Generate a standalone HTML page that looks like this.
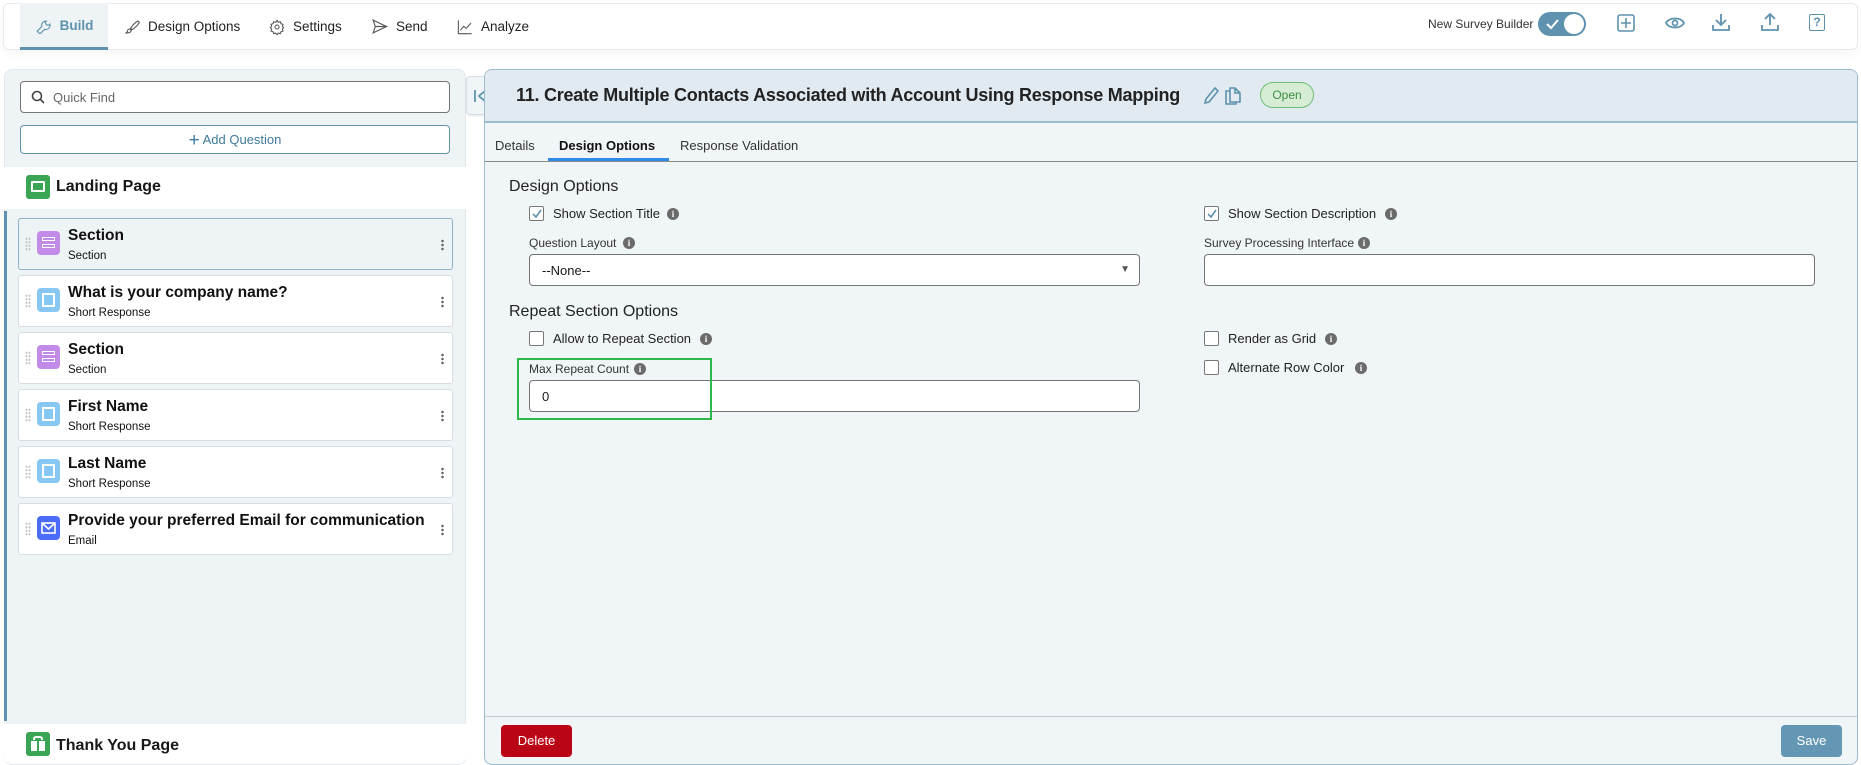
<!DOCTYPE html>
<html><head><meta charset="utf-8"><style>
*{box-sizing:border-box;margin:0;padding:0}
body{width:1861px;height:765px;background:#fff;font-family:"Liberation Sans",sans-serif;color:#181818;position:relative;overflow:hidden;font-size:13px}
.a{position:absolute}
.top{left:3px;top:3px;width:1855px;height:47px;border:1px solid #e6e9ee;border-radius:6px;background:#fff;box-shadow:0 4px 10px rgba(0,0,0,.04)}
.nav{top:3px;height:47px;display:flex;align-items:center;font-size:13.5px;color:#222}
.nav svg{margin-right:8px}
.build{left:20px;width:88px;background:#eef3f6;border-bottom:3px solid #5e92ae;justify-content:center;color:#5e92ae;font-weight:bold}
.lp{left:4px;top:69px;width:462px;height:696px;background:#eef3f6;border:1px solid #e3e8ec;border-radius:8px}
.inp{background:#fff;border:1px solid #747474;border-radius:4px}
.item{left:18px;width:435px;height:52px;background:#fff;border:1px solid #d8dde3;border-radius:3px}
.item .ic{position:absolute;left:18px;top:12px;width:23px;height:24px;border-radius:4px}
.item .t{position:absolute;left:49px;top:8px;font-size:15.5px;font-weight:bold;color:#111}
.item .s{position:absolute;left:49px;top:31px;font-size:11.5px;color:#111}
.item .dr{position:absolute;left:6px;top:18px;width:6px;height:14px;background-image:radial-gradient(circle,#c8c8c8 1px,transparent 1.2px);background-size:3px 3.5px}
.item .dots{position:absolute;right:8px;top:20px;width:3px;height:12px;background-image:radial-gradient(circle,#666 1.2px,transparent 1.4px);background-size:3px 4px}
.rp{left:484px;top:69px;width:1374px;height:696px;background:#f0f5f8;border:1px solid #9bbccc;border-radius:8px;overflow:hidden}
.lbl{font-size:12px;color:#333}
.cb{width:15px;height:15px;border:1px solid #777;border-radius:2px;background:#fff}
.info{width:12px;height:12px;border-radius:50%;background:#6b6b6b;color:#fff;font-size:9px;font-weight:bold;text-align:center;line-height:12px;font-family:"Liberation Serif",serif}
.chk{font-size:13px;color:#222}
</style></head><body>
<div class="a top"></div>
<div class="a nav build"><svg width="17" height="17" viewBox="0 0 24 24" fill="none" stroke="#5e92ae" stroke-width="1.6"><path d="M14.7 6.3a4 4 0 0 0 5 5l1.3-1.3a6 6 0 0 1-7.4 7.4L7 23.9 3 20l6.6-6.6A6 6 0 0 1 17 6l-2.3.3z"/></svg>Build</div>
<div class="a nav" style="left:124px"><svg width="16" height="16" viewBox="0 0 24 24" fill="none" stroke="#555" stroke-width="1.6"><path d="M21 3c-4 2-9 7-11 11l2 2c4-2 9-7 11-11zM9 15c-3 0-4 2-4 4l-2 2c3 0 7 0 8-4z"/></svg>Design Options</div>
<div class="a nav" style="left:269px"><svg width="16" height="16" viewBox="0 0 24 24" fill="none" stroke="#555" stroke-width="1.6"><circle cx="12" cy="12" r="3"/><path d="M12 2l2 3 3-1 1 3 3 1-1 3 2 2-2 2 1 3-3 1-1 3-3-1-2 3-2-3-3 1-1-3-3-1 1-3-2-2 2-2-1-3 3-1 1-3 3 1z"/></svg>Settings</div>
<div class="a nav" style="left:371px"><svg width="17" height="17" viewBox="0 0 24 24" fill="none" stroke="#555" stroke-width="1.6"><path d="M3 3l19 9-19 9 3-9zM6 12h16"/></svg>Send</div>
<div class="a nav" style="left:457px"><svg width="16" height="16" viewBox="0 0 24 24" fill="none" stroke="#555" stroke-width="1.6"><path d="M2 2v20h20M5 17l5-6 4 3 7-8"/></svg>Analyze</div>
<div class="a" style="left:1428px;top:17px;font-size:12px;color:#333">New Survey Builder</div>
<div class="a" style="left:1538px;top:12px;width:48px;height:24px;border-radius:12px;background:#5e92ae"><div class="a" style="left:26px;top:2px;width:20px;height:20px;border-radius:50%;background:#fff"></div><svg class="a" style="left:8px;top:6px" width="13" height="12" viewBox="0 0 13 12" fill="none" stroke="#fff" stroke-width="2"><path d="M1 6l4 4 7-8"/></svg></div>
<svg class="a" style="left:1617px;top:14px" width="18" height="18" viewBox="0 0 18 18" fill="none" stroke="#5e92ae" stroke-width="1.6"><rect x="1" y="1" width="16" height="16" rx="2"/><path d="M9 4v10M4 9h10"/></svg>
<svg class="a" style="left:1665px;top:15px" width="20" height="16" viewBox="0 0 20 16" fill="none" stroke="#5e92ae" stroke-width="1.8"><path d="M1 8c3-6 15-6 18 0-3 6-15 6-18 0z"/><circle cx="10" cy="8" r="2.5"/></svg>
<svg class="a" style="left:1712px;top:13px" width="18" height="18" viewBox="0 0 18 18" fill="none" stroke="#5e92ae" stroke-width="1.8"><path d="M9 1v11M4 7l5 5 5-5M1 12v5h16v-5"/></svg>
<svg class="a" style="left:1761px;top:13px" width="18" height="18" viewBox="0 0 18 18" fill="none" stroke="#5e92ae" stroke-width="1.8"><path d="M9 12V1M4 6l5-5 5 5M1 12v5h16v-5"/></svg>
<div class="a" style="left:1809px;top:14px;width:16px;height:17px;border:1.6px solid #5e92ae;border-radius:2px;color:#5e92ae;font-size:12px;font-weight:bold;text-align:center;line-height:14px">?</div>

<div class="a lp"></div>
<div class="a inp" style="left:20px;top:81px;width:430px;height:32px"><svg class="a" style="left:10px;top:8px" width="14" height="14" viewBox="0 0 14 14" fill="none" stroke="#444" stroke-width="1.6"><circle cx="6" cy="6" r="4.5"/><path d="M9.5 9.5L13 13"/></svg><span class="a" style="left:32px;top:8px;color:#666;font-size:13px">Quick Find</span></div>
<div class="a" style="left:20px;top:125px;width:430px;height:29px;background:#fff;border:1px solid #5e92ae;border-radius:4px;text-align:center;line-height:27px;color:#3f7a9c;font-size:13px"><span style="font-size:19px;vertical-align:-2px">+</span> Add Question</div>
<div class="a" style="left:4px;top:167px;width:462px;height:42px;background:#fff"></div>
<div class="a" style="left:26px;top:175px;width:24px;height:24px;border-radius:3px;background:#3aa655"><div class="a" style="left:5px;top:6px;width:14px;height:11px;border:2px solid #fff;border-radius:1px"></div></div>
<div class="a" style="left:56px;top:178px;font-size:16px;font-weight:bold">Landing Page</div>
<div class="a" style="left:4px;top:211px;width:3px;height:510px;background:#5e92ae"></div>

<div class="a item" style="top:218px;background:#eef3f6;border-color:#8fb1c4"><div class="dr"></div><div class="ic" style="background:#c38be8"><div class="a" style="left:5px;top:6px;width:13px;height:4px;border:1.5px solid #fff"></div><div class="a" style="left:5px;top:13px;width:13px;height:4px;border:1.5px solid #fff"></div></div><div class="t">Section</div><div class="s">Section</div><div class="dots"></div></div>
<div class="a item" style="top:275px"><div class="dr"></div><div class="ic" style="background:#86c7f3"><div class="a" style="left:5px;top:5px;width:13px;height:14px;border:2px solid #fff"></div></div><div class="t">What is your company name?</div><div class="s">Short Response</div><div class="dots"></div></div>
<div class="a item" style="top:332px"><div class="dr"></div><div class="ic" style="background:#c38be8"><div class="a" style="left:5px;top:6px;width:13px;height:4px;border:1.5px solid #fff"></div><div class="a" style="left:5px;top:13px;width:13px;height:4px;border:1.5px solid #fff"></div></div><div class="t">Section</div><div class="s">Section</div><div class="dots"></div></div>
<div class="a item" style="top:389px"><div class="dr"></div><div class="ic" style="background:#86c7f3"><div class="a" style="left:5px;top:5px;width:13px;height:14px;border:2px solid #fff"></div></div><div class="t">First Name</div><div class="s">Short Response</div><div class="dots"></div></div>
<div class="a item" style="top:446px"><div class="dr"></div><div class="ic" style="background:#86c7f3"><div class="a" style="left:5px;top:5px;width:13px;height:14px;border:2px solid #fff"></div></div><div class="t">Last Name</div><div class="s">Short Response</div><div class="dots"></div></div>
<div class="a item" style="top:503px"><div class="dr"></div><div class="ic" style="background:#4a6cf7"><svg class="a" style="left:4px;top:6px" width="15" height="12" viewBox="0 0 15 12" fill="none" stroke="#fff" stroke-width="1.6"><rect x="1" y="1" width="13" height="10"/><path d="M1 1l6.5 6L14 1"/></svg></div><div class="t">Provide your preferred Email for communication</div><div class="s">Email</div><div class="dots"></div></div>

<div class="a" style="left:4px;top:724px;width:462px;height:40px;background:#fff;border-radius:0 0 8px 8px"></div>
<div class="a" style="left:26px;top:732px;width:24px;height:24px;border-radius:3px;background:#3aa655"><div class="a" style="left:5px;top:9px;width:14px;height:10px;background:#fff"></div><div class="a" style="left:11px;top:9px;width:2px;height:10px;background:#3aa655"></div><div class="a" style="left:7px;top:4px;width:10px;height:4px;border:2px solid #fff;border-bottom:none;border-radius:3px 3px 0 0"></div></div>
<div class="a" style="left:56px;top:737px;font-size:16px;font-weight:bold">Thank You Page</div>

<div class="a" style="left:466px;top:76px;width:29px;height:39px;background:#f0f5f8;border:1px solid #d6dde3;border-radius:4px;box-shadow:1px 1px 3px rgba(0,0,0,.1)"><svg class="a" style="left:6px;top:12px" width="15" height="14" viewBox="0 0 15 14" fill="none" stroke="#5e92ae" stroke-width="1.8"><path d="M2 1v12M13 1L6 7l7 6z"/></svg></div>

<div class="a rp">
<div class="a" style="left:0;top:0;width:1374px;height:53px;background:#e2eaf1;border-bottom:2px solid #9bbccc"></div>
<div class="a" style="left:31px;top:15px;font-size:18px;font-weight:bold;color:#222;letter-spacing:-0.25px">11. Create Multiple Contacts Associated with Account Using Response Mapping</div>
<svg class="a" style="left:718px;top:17px" width="16" height="18" viewBox="0 0 16 18" fill="none" stroke="#5e92ae" stroke-width="1.6"><path d="M12 1l3 3-9 11-4 1 1-4z"/></svg>
<svg class="a" style="left:739px;top:14px" width="18" height="21" viewBox="0 0 18 21" fill="none" stroke="#5e92ae" stroke-width="1.6"><path d="M6 4h5l5 5v9H6z"/><path d="M11 4v5h5"/><path d="M6 7H2v13h10v-2"/></svg>
<div class="a" style="left:775px;top:12px;width:54px;height:26px;border:1px solid #6dbf74;background:#d7ecd4;border-radius:13px;color:#3c8f45;font-size:12px;text-align:center;line-height:24px">Open</div>
<div class="a" style="left:10px;top:68px;font-size:13px;color:#333">Details</div>
<div class="a" style="left:74px;top:68px;font-size:13px;font-weight:bold;color:#111">Design Options</div>
<div class="a" style="left:63px;top:88px;width:121px;height:3px;background:#2f8be6"></div>
<div class="a" style="left:195px;top:68px;font-size:13px;color:#333">Response Validation</div>
<div class="a" style="left:0;top:91px;width:1374px;height:1px;background:#8a8a8a"></div>

<div class="a" style="left:24px;top:108px;font-size:16px;color:#222">Design Options</div>
<div class="a cb" style="left:44px;top:136px"><svg class="a" style="left:2px;top:2px" width="10" height="10" viewBox="0 0 10 10" fill="none" stroke="#5e92ae" stroke-width="1.6"><path d="M1 5l3 3 5-7"/></svg></div>
<div class="a chk" style="left:68px;top:136px">Show Section Title</div><div class="a info" style="left:182px;top:138px">i</div>
<div class="a cb" style="left:719px;top:136px"><svg class="a" style="left:2px;top:2px" width="10" height="10" viewBox="0 0 10 10" fill="none" stroke="#5e92ae" stroke-width="1.6"><path d="M1 5l3 3 5-7"/></svg></div>
<div class="a chk" style="left:743px;top:136px">Show Section Description</div><div class="a info" style="left:900px;top:138px">i</div>

<div class="a lbl" style="left:44px;top:166px">Question Layout</div><div class="a info" style="left:138px;top:167px">i</div>
<div class="a inp" style="left:44px;top:184px;width:611px;height:32px"><span class="a" style="left:12px;top:8px;font-size:13px">--None--</span><span class="a" style="right:9px;top:9px;font-size:10px;color:#555">▼</span></div>
<div class="a lbl" style="left:719px;top:166px">Survey Processing Interface</div><div class="a info" style="left:873px;top:167px">i</div>
<div class="a inp" style="left:719px;top:184px;width:611px;height:32px"></div>

<div class="a" style="left:24px;top:233px;font-size:16px;color:#222">Repeat Section Options</div>
<div class="a cb" style="left:44px;top:261px"></div>
<div class="a chk" style="left:68px;top:261px">Allow to Repeat Section</div><div class="a info" style="left:215px;top:263px">i</div>
<div class="a cb" style="left:719px;top:261px"></div>
<div class="a chk" style="left:743px;top:261px">Render as Grid</div><div class="a info" style="left:840px;top:263px">i</div>
<div class="a cb" style="left:719px;top:290px"></div>
<div class="a chk" style="left:743px;top:290px">Alternate Row Color</div><div class="a info" style="left:870px;top:292px">i</div>
<div class="a lbl" style="left:44px;top:292px">Max Repeat Count</div><div class="a info" style="left:149px;top:293px">i</div>
<div class="a inp" style="left:44px;top:310px;width:611px;height:32px"><span class="a" style="left:12px;top:8px;font-size:13px">0</span></div>
<div class="a" style="left:32px;top:288px;width:195px;height:62px;border:2.5px solid #2db84b"></div>

<div class="a" style="left:0;top:646px;width:1374px;height:1px;background:#c3c9cf"></div>
<div class="a" style="left:16px;top:655px;width:71px;height:32px;background:#ba0517;border-radius:4px;color:#fff;font-size:13px;text-align:center;line-height:32px">Delete</div>
<div class="a" style="left:1296px;top:655px;width:61px;height:32px;background:#6397b4;border-radius:4px;color:#fff;font-size:13px;text-align:center;line-height:32px">Save</div>
</div>
</body></html>
